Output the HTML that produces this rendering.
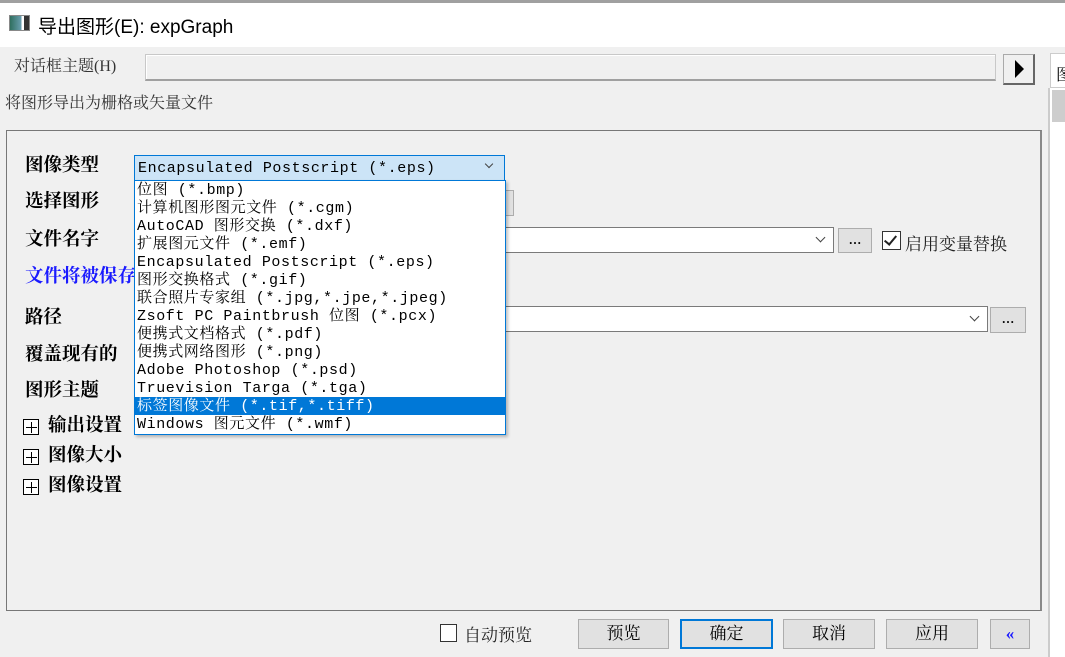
<!DOCTYPE html>
<html><head><meta charset="utf-8"><style>
*{margin:0;padding:0;box-sizing:border-box}
body{width:1065px;height:657px;background:#f0f0f0;position:relative;overflow:hidden;font-family:"Liberation Serif","Noto Serif CJK SC",serif;color:#000}
.a{position:absolute}
.lbl{position:absolute;left:25px;font-size:18.5px;font-weight:bold;font-family:"Liberation Serif","Noto Serif CJK SC",serif;line-height:20px;white-space:nowrap}
.plus{position:absolute;left:23px;width:16px;height:16px;border:1px solid #000;background:#fff}
.plus:before{content:"";position:absolute;left:7px;top:2px;width:1px;height:11px;background:#000}
.plus:after{content:"";position:absolute;left:2px;top:7px;width:11px;height:1px;background:#000}
.combo{position:absolute;background:#fff;border:1px solid #7a7a7a}
.chev{position:absolute;width:7px;height:7px;border-right:1.3px solid #444;border-bottom:1.3px solid #444;transform:rotate(45deg)}
.btn{position:absolute;background:#e1e1e1;border:1px solid #adadad;font-size:17px;text-align:center;font-family:"Liberation Serif","Noto Serif CJK SC",serif}
.mono{font-family:"Liberation Mono","Noto Serif CJK SC",monospace}
.list div{height:18px;line-height:19px;font-size:15px;padding-left:2px;white-space:nowrap;color:#000;letter-spacing:0.6px}
</style></head><body>
<div class="a" style="left:0;top:0;width:1065px;height:47px;background:#fff;border-top:3px solid #a0a0a0"></div>
<div class="a" style="left:9px;top:15px;width:21px;height:16px;border:1px solid #888;background:linear-gradient(90deg,#2f6f5f 0,#6a9fb0 60%,#fff 60%,#fff 75%,#333 75%)"></div>
<div class="a" style="left:38px;top:12px;font-size:19px;font-family:'Liberation Sans','Noto Sans CJK SC',sans-serif">导出图形(E): expGraph</div>

<div class="a" style="left:14px;top:53px;font-size:16px;color:#333">对话框主题(H)</div>
<div class="a" style="left:145px;top:54px;width:851px;height:27px;border:1px solid #c8c8c8;border-bottom:2px solid #a0a0a0;background:#f0f0f0;box-shadow:inset 1px 1px 0 #fff"></div>
<div class="a" style="left:1003px;top:54px;width:32px;height:31px;background:#f0f0f0;border:1px solid #aaa;border-right:2px solid #666;border-bottom:2px solid #666"></div>
<div class="a" style="left:1015px;top:60px;width:0;height:0;border-left:9px solid #000;border-top:9px solid transparent;border-bottom:9px solid transparent"></div>

<div class="a" style="left:1050px;top:53px;width:15px;height:35px;background:#fff;border:1px solid #ccc;border-right:none;overflow:hidden"><span style="position:absolute;left:5px;top:8px;font-size:16px">图</span></div>
<div class="a" style="left:1048px;top:88px;width:17px;height:569px;background:#fff;border-left:2px solid #ccc"></div>
<div class="a" style="left:1052px;top:90px;width:13px;height:32px;background:#cdcdcd"></div>

<div class="a" style="left:5px;top:90px;font-size:16px;color:#333">将图形导出为栅格或矢量文件</div>

<div class="a" style="left:6px;top:130px;width:1036px;height:481px;border:1px solid #777;border-right:2px solid #888"></div>

<div class="lbl" style="top:156px">图像类型</div>
<div class="lbl" style="top:192px">选择图形</div>
<div class="lbl" style="top:230px">文件名字</div>
<div class="lbl" style="top:267px;color:#1a1aff">文件将被保存</div>
<div class="lbl" style="top:308px">路径</div>
<div class="lbl" style="top:345px">覆盖现有的</div>
<div class="lbl" style="top:381px">图形主题</div>
<div class="plus" style="top:419px"></div><div class="lbl" style="left:48px;top:416px">输出设置</div>
<div class="plus" style="top:449px"></div><div class="lbl" style="left:48px;top:446px">图像大小</div>
<div class="plus" style="top:479px"></div><div class="lbl" style="left:48px;top:476px">图像设置</div>

<div class="a" style="left:490px;top:190px;width:24px;height:26px;background:#e1e1e1;border:1px solid #adadad"></div>
<div class="combo" style="left:490px;top:227px;width:344px;height:26px"><div class="chev" style="left:326px;top:6px"></div></div>
<div class="btn" style="left:838px;top:228px;width:34px;height:25px;line-height:20px">...</div>
<div class="a" style="left:882px;top:231px;width:19px;height:19px;border:1.5px solid #333;background:#fff"></div>
<div class="a" style="left:887px;top:233px;width:7px;height:12px;border-right:2px solid #222;border-bottom:2px solid #222;transform:rotate(40deg)"></div>
<div class="a" style="left:905px;top:230px;font-size:17px;color:#222">启用变量替换</div>
<div class="combo" style="left:490px;top:306px;width:498px;height:26px"><div class="chev" style="left:480px;top:6px"></div></div>
<div class="btn" style="left:990px;top:307px;width:36px;height:26px;line-height:20px">...</div>

<div class="a" style="left:134px;top:155px;width:371px;height:26px;background:#cce4f7;border:1px solid #0078d7"></div>
<div class="a mono" style="left:138px;top:159px;font-size:15px;line-height:20px;letter-spacing:0.6px">Encapsulated Postscript (*.eps)</div>
<div class="chev" style="left:486px;top:161px;width:6px;height:6px;border-width:1px"></div>
<div class="a list mono" style="left:134px;top:180px;width:372px;height:255px;background:#fff;border:1px solid #0078d7;box-shadow:2px 2px 3px rgba(0,0,0,.25)">
<div>位图 (*.bmp)</div>
<div>计算机图形图元文件 (*.cgm)</div>
<div>AutoCAD 图形交换 (*.dxf)</div>
<div>扩展图元文件 (*.emf)</div>
<div>Encapsulated Postscript (*.eps)</div>
<div>图形交换格式 (*.gif)</div>
<div>联合照片专家组 (*.jpg,*.jpe,*.jpeg)</div>
<div>Zsoft PC Paintbrush 位图 (*.pcx)</div>
<div>便携式文档格式 (*.pdf)</div>
<div>便携式网络图形 (*.png)</div>
<div>Adobe Photoshop (*.psd)</div>
<div>Truevision Targa (*.tga)</div>
<div style="background:#0078d7;color:#fff">标签图像文件 (*.tif,*.tiff)</div>
<div>Windows 图元文件 (*.wmf)</div>
</div>

<div class="a" style="left:440px;top:624px;width:17px;height:18px;border:1.3px solid #333;background:#fff"></div>
<div class="a" style="left:464px;top:621px;font-size:17px;color:#222">自动预览</div>
<div class="btn" style="left:578px;top:619px;width:91px;height:30px;line-height:28px">预览</div>
<div class="btn" style="left:680px;top:619px;width:93px;height:30px;line-height:26px;border:2px solid #0078d7">确定</div>
<div class="btn" style="left:783px;top:619px;width:92px;height:30px;line-height:28px">取消</div>
<div class="btn" style="left:886px;top:619px;width:92px;height:30px;line-height:28px">应用</div>
<div class="btn" style="left:990px;top:619px;width:40px;height:30px;line-height:28px;color:#1a1aff;font-weight:bold">«</div>
</body></html>
